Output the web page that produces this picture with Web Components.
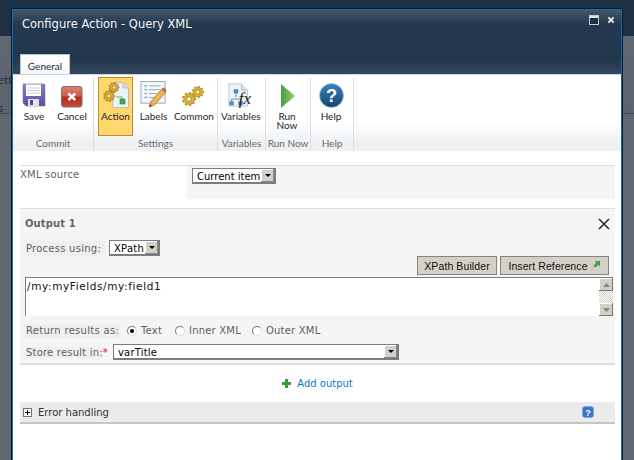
<!DOCTYPE html>
<html>
<head>
<meta charset="utf-8">
<title>Configure Action - Query XML</title>
<style>
  html, body { margin: 0; height: 100%; overflow: hidden; }
  body { background: #5c6570; font-family: "DejaVu Sans", sans-serif; }
</style>
</head>
<body>
<page-backdrop></page-backdrop>
<config-dialog heading="Configure Action - Query XML">
  <ribbon-group slot="ribbon" label="Commit" width="81" pad="2">
    <ribbon-button label="Save" width="38" icon="save"></ribbon-button>
    <ribbon-button label="Cancel" width="38" icon="cancel"></ribbon-button>
  </ribbon-group>
  <ribbon-group slot="ribbon" label="Settings" width="124" pad="4">
    <ribbon-button label="Action" width="35" icon="action" active></ribbon-button>
    <ribbon-button label="Labels" width="41" icon="labels"></ribbon-button>
    <ribbon-button label="Common" width="38" icon="common"></ribbon-button>
  </ribbon-group>
  <ribbon-group slot="ribbon" label="Variables" width="48" pad="3">
    <ribbon-button label="Variables" width="39" icon="variables"></ribbon-button>
  </ribbon-group>
  <ribbon-group slot="ribbon" label="Run Now" width="45" pad="1">
    <ribbon-button label="Run Now" width="40" icon="run"></ribbon-button>
  </ribbon-group>
  <ribbon-group slot="ribbon" label="Help" width="43" pad="1">
    <ribbon-button label="Help" width="38" icon="help"></ribbon-button>
  </ribbon-group>

  <source-row label="XML source">
    <win-select width="84">Current item</win-select>
  </source-row>

  <output-panel heading="Output 1">
    <win-select slot="process" width="51">XPath</win-select>
    <win-button slot="actions" width="80">XPath Builder</win-button>
    <win-button slot="actions" width="109" reference>Insert Reference</win-button>
    <span slot="query">/my:myFields/my:field1</span>
    <win-radio slot="results" width="48" checked>Text</win-radio>
    <win-radio slot="results" width="77">Inner XML</win-radio>
    <win-radio slot="results">Outer XML</win-radio>
    <win-select slot="store" width="286">varTitle</win-select>
  </output-panel>

  <add-output>Add output</add-output>
  <error-bar>Error handling</error-bar>
</config-dialog>

<script>
// regular gear outline, centred on cx,cy
function gearPath(cx, cy, r, teeth) {
  let d = '';
  const step = Math.PI * 2 / teeth;
  for (let i = 0; i < teeth; i++) {
    const a = i * step;
    const pts = [[r * 0.76, a - step * 0.32], [r, a - step * 0.18], [r, a + step * 0.18], [r * 0.76, a + step * 0.32]];
    pts.forEach((p, j) => {
      const x = cx + p[0] * Math.cos(p[1]);
      const y = cy + p[0] * Math.sin(p[1]);
      d += (i === 0 && j === 0 ? 'M' : 'L') + x.toFixed(2) + ' ' + y.toFixed(2);
    });
  }
  return d + 'Z';
}

function gear(cx, cy, r) {
  return `<path d="${gearPath(cx, cy, r, 9)}" fill="#e3b42c" stroke="#96700f" stroke-width=".8"/>
    <circle cx="${cx}" cy="${cy}" r="${r * 0.36}" fill="#fff6cf" stroke="#96700f" stroke-width=".8"/>`;
}

const icons = {
  save: `<svg width="24" height="25" viewBox="0 0 24 25">
    <defs><linearGradient id="fl" x1="0" y1="0" x2="0" y2="1"><stop offset="0" stop-color="#8d7dc6"/><stop offset="1" stop-color="#5c4c9c"/></linearGradient></defs>
    <path d="M1 1h21l1 1v21H4l-3-3z" fill="url(#fl)" stroke="#7a6db0" stroke-width=".6"/>
    <rect x="4" y="1.500" width="15" height="11.500" fill="#fff"/>
    <path d="M5 5h13M5 7.500h13M5 10h13" stroke="#c9c9d6" stroke-width=".9"/>
    <rect x="6" y="16" width="11" height="7" fill="#dfe0e8"/>
    <rect x="8" y="17" width="3" height="5" fill="#56488f"/>
  </svg>`,
  cancel: `<svg width="22" height="22" viewBox="0 0 22 22">
    <defs><linearGradient id="cn" x1="0" y1="0" x2="0" y2="1"><stop offset="0" stop-color="#d98074"/><stop offset=".48" stop-color="#cf5b4c"/><stop offset=".5" stop-color="#ad281c"/><stop offset="1" stop-color="#c94a36"/></linearGradient></defs>
    <rect x=".5" y=".5" width="20.500" height="20.500" rx="2.500" fill="url(#cn)" stroke="#8c6f6a"/>
    <path d="M7.300 7.500l7 6.500M14.300 7.500l-7 6.500" stroke="#fff" stroke-width="2.400"/>
  </svg>`,
  action: `<svg width="26" height="26" viewBox="0 0 26 26">
    <path d="M10 .5h10l5.500 5.500v19.500H10z" fill="#eef3f7" stroke="#a8b6c2" stroke-width=".8"/>
    <path d="M20 .5v5.500h5.500" fill="#d4dfe8" stroke="#a8b6c2" stroke-width=".8"/>
    <path d="M13 15h6v3" fill="none" stroke="#7aa08c"/>
    <rect x="17" y="17" width="5" height="5" fill="#3fae49" stroke="#2a7f33" stroke-width=".6"/>
    ${gear(11, 5.500, 5)}${gear(6, 14, 5.500)}
  </svg>`,
  labels: `<svg width="28" height="27" viewBox="0 0 28 28">
    <rect x=".5" y=".5" width="25" height="22.500" fill="#f5f8fb" stroke="#9aa8b6"/>
    <path d="M4 5h3M4 9h3M4 13h3M4 17h3" stroke="#7c9fc4" stroke-width="1.200"/>
    <path d="M9 5h12M9 9h11M9 13h8M9 17h5" stroke="#9aa3ad" stroke-width="1"/>
    <path d="M9 27l2-6L22 8.500l4 3.500L14.500 25z" fill="#e7b54a" stroke="#8a6a22" stroke-width=".7"/>
    <path d="M22 8.500l2-2 3 3-1 2.500z" fill="#c9555c"/>
    <path d="M9 27l.9-3 1.900 1.700z" fill="#333"/>
  </svg>`,
  common: `<svg width="22" height="23" viewBox="2 1 25 24">${gear(20, 8, 6.500)}${gear(10, 16, 7.500)}</svg>`,
  variables: `<svg width="27" height="25" viewBox="0 0 30 28">
    <path d="M2 1h14l7 7v18H2z" fill="#eef3f8" stroke="#a7b5c3" stroke-width=".8"/>
    <path d="M16 1v7h7" fill="#d6e0ea" stroke="#a7b5c3" stroke-width=".8"/>
    <path d="M10 11v5M5 21v-3h10v3" fill="none" stroke="#5d84b4"/>
    <rect x="7.500" y="7" width="5" height="4.500" fill="#4f86c6"/>
    <rect x="2.500" y="20.500" width="5" height="4.500" fill="#4f86c6"/>
    <rect x="12.500" y="20.500" width="5" height="4.500" fill="#4f86c6"/>
    <text x="13" y="23" font-family="Liberation Serif, serif" font-style="italic" font-size="19" fill="#222">fx</text>
  </svg>`,
  run: `<svg width="15" height="24" viewBox="0 0 15 24">
    <defs><linearGradient id="rn" x1="0" y1="0" x2="1" y2="0"><stop offset="0" stop-color="#3f9f3a"/><stop offset="1" stop-color="#9ccf6e"/></linearGradient></defs>
    <path d="M1 0l14 12L1 24z" fill="url(#rn)"/>
  </svg>`,
  help: `<svg width="25" height="25" viewBox="0 0 26 26">
    <defs><linearGradient id="hp" x1="0" y1="0" x2="0" y2="1"><stop offset="0" stop-color="#3c83bd"/><stop offset="1" stop-color="#15426f"/></linearGradient></defs>
    <circle cx="13" cy="13" r="12.500" fill="url(#hp)" stroke="#a9cfe6" stroke-width=".8"/>
    <text x="13" y="20" text-anchor="middle" font-family="Liberation Sans, sans-serif" font-weight="700" font-size="19" fill="#fff">?</text>
  </svg>`
};

// every element below just stamps its markup into an open shadow root
class ShadowEl extends HTMLElement {
  constructor() {
    super();
    this.attachShadow({ mode: 'open' });
  }
  connectedCallback() {
    this.shadowRoot.innerHTML = this.render();
  }
}

class PageBackdrop extends ShadowEl {
  render() {
    return `<style>
      :host { position: fixed; inset: 0; display: block; overflow: hidden;
        background: linear-gradient(#1d2f42 0, #1d2f42 36px, #5e6772 36px, #5a636e 113px, #444c57 113px, #444c57 114px, #5e6772 114px); }
      span { position: absolute; left: -8px; font: 11px "Open Sans", sans-serif; color: #222a33; }
    </style>
    <span style="top:72px">Setti</span>
    <span style="top:100px;left:-2px">s</span>`;
  }
}

class ConfigDialog extends ShadowEl {
  render() {
    return `<style>
      :host { position: relative; display: flex; flex-direction: column; box-sizing: border-box;
        margin: 8px 11px 0; height: 452px; border: 1px solid #0e1a27; border-bottom: 0; }
      .frame { flex: 1; display: flex; flex-direction: column; border: 1px solid #0f6cae; border-bottom: 0;
        background: #fff; min-height: 0; }
      .head { height: 64px; box-sizing: border-box; position: relative; flex: none; padding: 6px 0 0 9px;
        background: linear-gradient(#435669 0, #24394f 14px, #21374d 48px, #33475b 64px); }
      h1 { margin: 0; font: 400 11.5px/16px "DejaVu Sans", sans-serif; color: #f2f5f8; }
      .tab { position: absolute; left: 7px; bottom: 0; width: 50px; height: 20px; box-sizing: border-box;
        background: linear-gradient(#fff, #f6f7f9); border: 1px solid #b9c6d3; border-bottom: 0;
        font: 10px/23px "Lato", sans-serif; text-align: center; color: #22303c; }
      .ctl { position: absolute; right: 6px; top: 5px; display: flex; gap: 8px; align-items: center; }
      .ribbon { flex: none; display: flex; height: 76px; border-top: 1px solid #c9d5e0;
        background: linear-gradient(#fff 0, #fff 45px, #eef0f2 70px, #eef0f2 100%); }
      .body { flex: 1; padding: 14px 6px 0 7px; min-height: 0; }
    </style>
    <div class="frame">
      <div class="head">
        <h1>${this.getAttribute('heading')}</h1>
        <div class="tab">General</div>
        <div class="ctl">
          <svg width="10" height="10" viewBox="0 0 10 10"><rect x=".5" y=".5" width="9" height="9" fill="#1d2f42" stroke="#c4ccd4"/><rect x="1" y="1" width="8" height="2" fill="#dfe4ea"/></svg>
          <svg width="8" height="8" viewBox="0 0 9 9"><path d="M1.500 1.500l6 6M7.500 1.500l-6 6" stroke="#eef1f4" stroke-width="2"/></svg>
        </div>
      </div>
      <div class="ribbon"><slot name="ribbon"></slot></div>
      <div class="body"><slot></slot></div>
    </div>`;
  }
}

class RibbonGroup extends ShadowEl {
  render() {
    const pad = this.getAttribute('pad') || 2;
    return `<style>
      :host { display: flex; flex-direction: column; box-sizing: border-box; width: ${this.getAttribute('width')}px; flex: none;
        border-right: 1px solid #dcdfe2; margin-top: 3px; height: 73px; }
      .items { display: flex; flex: 1; padding-left: ${pad}px; }
      .name { font: 10px/14px "Lato", sans-serif; color: #5f6b75; text-align: center; height: 15px; white-space: nowrap; }
    </style>
    <div class="items"><slot></slot></div>
    <div class="name">${this.getAttribute('label')}</div>`;
  }
}

class RibbonButton extends ShadowEl {
  render() {
    const words = this.getAttribute('label').split(' ').join('<br>');
    return `<style>
      :host { display: block; flex: none; width: ${this.getAttribute('width')}px; height: 58px; box-sizing: border-box; }
      :host([active]) { background: #ffd76e; border: 1px solid #c58a1f; margin-top: -1px; height: 59px; }
      .pic { height: 30px; display: flex; justify-content: center; align-items: flex-end; }
      .txt { font: 10px/9px "Lato", sans-serif; color: #1c2730; text-align: center; margin-top: 4px; white-space: nowrap; }
    </style>
    <div class="pic">${icons[this.getAttribute('icon')]}</div>
    <div class="txt">${words}</div>`;
  }
}

class SourceRow extends ShadowEl {
  render() {
    return `<style>
      :host { display: flex; height: 34px; box-sizing: border-box; border-top: 1px solid #dedede; }
      .lbl { width: 167px; flex: none; font: 10px/16px "DejaVu Sans", sans-serif; color: #5f5f5f; padding-top: 1px; letter-spacing: .2px; }
      .val { flex: 1; background: #f5f5f5; padding: 2px 5px; }
    </style>
    <div class="lbl">${this.getAttribute('label')}</div>
    <div class="val"><slot></slot></div>`;
  }
}

class WinSelect extends ShadowEl {
  render() {
    return `<style>
      :host { display: flex; width: ${this.getAttribute('width')}px; height: 16px; box-sizing: border-box;
        border: 1px solid #7b7b83; border-right-width: 2px; border-bottom-width: 2px; background: #fff; }
      .v { flex: 1; font: 10px/15px "DejaVu Sans", sans-serif; color: #000; padding-left: 4px; overflow: hidden; white-space: nowrap; }
      .b { width: 13px; flex: none; background: #d4d0c8; box-sizing: border-box;
        box-shadow: inset -1px -1px 0 #8a8780, inset 1px 1px 0 #fff; display: flex; align-items: center; justify-content: center; }
      .b i { width: 0; height: 0; border: 3.500px solid transparent; border-top: 3.500px solid #000; border-bottom: 0; }
    </style>
    <div class="v"><slot></slot></div>
    <div class="b"><i></i></div>`;
  }
}

class WinButton extends ShadowEl {
  render() {
    const ref = this.hasAttribute('reference');
    return `<style>
      :host { display: flex; align-items: center; justify-content: center; width: ${this.getAttribute('width')}px; height: 19px; box-sizing: border-box; gap: 2px;
        background: #d4d0c8; border: 1px solid #85857f; font: 10.5px "Liberation Sans", sans-serif; letter-spacing: .1px; color: #111; white-space: nowrap; }
    </style>
    <slot></slot>
    ${ref ? `<svg width="11" height="11" viewBox="0 0 11 11"><path d="M1 10l6-6" stroke="#a9d8ae" stroke-width="1.600" stroke-dasharray="1.500 1"/><path d="M4.500 1H10v5.500L8.200 4.800 5.500 7.500 3.500 5.500l2.700-2.700z" fill="#3f9f4b"/></svg>` : ''}`;
  }
}

class WinRadio extends ShadowEl {
  render() {
    const w = this.getAttribute('width');
    return `<style>
      :host { display: inline-flex; align-items: center; gap: 4px; font: 10px/14px "DejaVu Sans", sans-serif; color: #5f5f5f; letter-spacing: .2px;
        ${w ? `width: ${w}px;` : ''} white-space: nowrap; }
      i { width: 10px; height: 10px; box-sizing: border-box; border-radius: 50%; background: #fff; border: 1px solid #777;
        border-right-color: #ddd; border-bottom-color: #ddd; display: flex; align-items: center; justify-content: center; }
      :host([checked]) i::after { content: ""; width: 4px; height: 4px; border-radius: 50%; background: #000; }
    </style>
    <i></i><slot></slot>`;
  }
}

class OutputPanel extends ShadowEl {
  render() {
    return `<style>
      :host { display: block; box-sizing: border-box; margin-top: 9px; height: 157px; background: #f5f5f5;
        border-top: 1px solid #dedede; border-bottom: 2px solid #dedede; padding: 0 2px 0 5px; font: 10px/14px "DejaVu Sans", sans-serif; color: #5f5f5f; }
      .top { display: flex; justify-content: space-between; align-items: center; height: 30px; margin-bottom: 1px; padding-right: 3px; }
      b { color: #666; letter-spacing: .1px; }
      .proc { display: flex; align-items: center; height: 16px; letter-spacing: .25px; }
      .tag { flex: none; background: #efefef; white-space: nowrap; }
      .proc .tag { width: 81px; padding: 1px 0 0 1px; box-sizing: border-box; margin-right: 3px; }
      .actions { display: flex; justify-content: flex-end; gap: 3px; height: 18px; margin-right: 4px; }
      .query { display: flex; height: 39px; margin-top: 3px; box-sizing: border-box; background: #fff; border: 1px solid #7b7b83; border-right: 0; border-bottom: 0; }
      .q { flex: 1; padding: 1px 0 0 1px; font: 10.5px/14px "DejaVu Sans", sans-serif; color: #111; letter-spacing: .6px; }
      .sb { width: 14px; display: flex; flex-direction: column; justify-content: space-between;
        background: repeating-conic-gradient(#d4d0c8 0 25%, #fff 0 50%) 0 0 / 2px 2px; }
      .sb i { height: 13px; background: #d4d0c8; box-shadow: inset -1px -1px 0 #777, inset 1px 1px 0 #fff; display: flex; align-items: center; justify-content: center; }
      .sb svg { display: block; }
      .res { display: flex; align-items: center; height: 14px; margin-top: 8px; letter-spacing: .3px; }
      .res .tag { width: 96px; padding-left: 1px; box-sizing: border-box; margin-right: 6px; }
      .store { display: flex; align-items: center; height: 16px; margin-top: 6px; letter-spacing: .2px; }
      .lab { width: 88px; flex: none; white-space: nowrap; padding-top: 2px; }
      .lab .tag { padding-left: 1px; }
      em { color: #e00; font-style: normal; }
      .x { display: block; }
    </style>
    <div class="top"><b>${this.getAttribute('heading')}</b>
      <svg class="x" width="12" height="12" viewBox="0 0 12 12"><path d="M1 1l10 10M11 1L1 11" stroke="#2c2c2c" stroke-width="1.600"/></svg>
    </div>
    <div class="proc"><span class="tag">Process using:</span><slot name="process"></slot></div>
    <div class="actions"><slot name="actions"></slot></div>
    <div class="query">
      <div class="q"><slot name="query"></slot></div>
      <div class="sb">
        <i><svg width="7" height="4"><path d="M3.500 0L7 4H0z" fill="#8a8780"/></svg></i>
        <i><svg width="7" height="4"><path d="M0 0h7L3.500 4z" fill="#8a8780"/></svg></i>
      </div>
    </div>
    <div class="res"><span class="tag">Return results as:</span><slot name="results"></slot></div>
    <div class="store"><div class="lab"><span class="tag">Store result in:</span><em>*</em></div><slot name="store"></slot></div>`;
  }
}

class AddOutput extends ShadowEl {
  render() {
    return `<style>
      :host { display: flex; justify-content: center; align-items: center; gap: 6px; height: 37px; font: 10px/14px "DejaVu Sans", sans-serif; color: #0b78d0; }
    </style>
    <svg width="9" height="9" viewBox="0 0 9 9"><path d="M3 0h3v3h3v3H6v3H3V6H0V3h3z" fill="#3d9a3c"/></svg>
    <slot></slot>`;
  }
}

class ErrorBar extends ShadowEl {
  render() {
    return `<style>
      :host { display: flex; align-items: center; height: 22px; box-sizing: border-box; padding: 0 21px 0 3px; background: #ebebeb;
        border-bottom: 2px solid #c6c6c6; font: 10px/14px "DejaVu Sans", sans-serif; color: #333; }
      .p { border: 1px solid #777; background: #fff; position: relative; margin-right: 6px; width: 7px; height: 7px; }
      .p::before { content: ""; position: absolute; left: 1px; right: 1px; top: 3px; height: 1px; background: #000; }
      .p::after { content: ""; position: absolute; top: 1px; bottom: 1px; left: 3px; width: 1px; background: #000; }
      .t { flex: 1; padding-top: 2px; }
    </style>
    <div class="p"></div><div class="t"><slot></slot></div>
    <svg width="12" height="12" viewBox="0 0 12 12"><rect x=".5" y=".5" width="11" height="11" rx="2.500" fill="#3b74c9" stroke="#7fa6dc"/><text x="6" y="9.500" text-anchor="middle" font-family="Liberation Sans, sans-serif" font-weight="700" font-size="9" fill="#fff">?</text></svg>`;
  }
}

customElements.define('page-backdrop', PageBackdrop);
customElements.define('config-dialog', ConfigDialog);
customElements.define('ribbon-group', RibbonGroup);
customElements.define('ribbon-button', RibbonButton);
customElements.define('source-row', SourceRow);
customElements.define('win-select', WinSelect);
customElements.define('win-button', WinButton);
customElements.define('win-radio', WinRadio);
customElements.define('output-panel', OutputPanel);
customElements.define('add-output', AddOutput);
customElements.define('error-bar', ErrorBar);
</script>
</body>
</html>
